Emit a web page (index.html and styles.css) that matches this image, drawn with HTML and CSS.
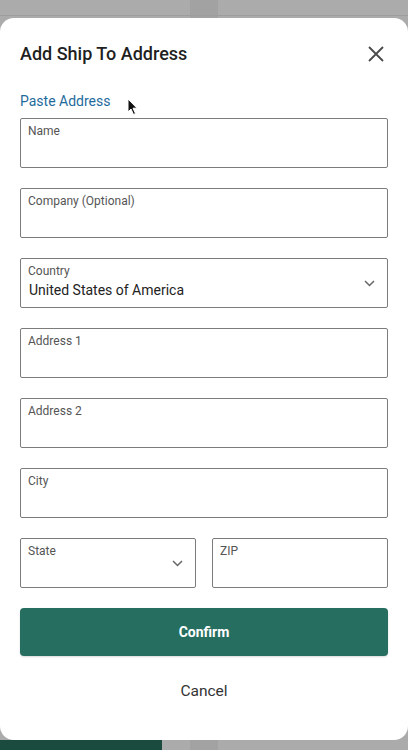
FILE: index.html
```html
<!DOCTYPE html>
<html lang="en">
<head>
<meta charset="utf-8">
<title>Add Ship To Address</title>
<link rel="stylesheet" href="styles.css">
</head>
<body>
<div class="modal">
  <div class="header">
    <h1 class="title">Add Ship To Address</h1>
    <button class="close" aria-label="Close">
      <svg width="16" height="16" viewBox="0 0 16 16"><path d="M1 1L15 15M15 1L1 15" stroke="#4a4a4a" stroke-width="1.8" fill="none"/></svg>
    </button>
  </div>
  <div class="paste-row">
    <a class="paste">Paste Address</a>
    <svg class="cursor" width="12" height="18" viewBox="0 0 12 18"><path d="M1 1L1 14L4 11L6.5 16.5L8.5 15.5L6 10.2L10 10.2Z" fill="#111" stroke="#fff" stroke-width="1"/></svg>
  </div>
  <div class="fields">
    <div class="field"><span class="label">Name</span></div>
    <div class="field"><span class="label">Company (Optional)</span></div>
    <div class="field select"><span class="label">Country</span><span class="value">United States of America</span>
      <svg class="chev" width="11" height="7" viewBox="0 0 11 7"><path d="M1 1L5.5 5.5L10 1" stroke="#666" stroke-width="1.5" fill="none"/></svg></div>
    <div class="field"><span class="label">Address 1</span></div>
    <div class="field"><span class="label">Address 2</span></div>
    <div class="field"><span class="label">City</span></div>
    <div class="row">
      <div class="field select"><span class="label">State</span>
        <svg class="chev" width="11" height="7" viewBox="0 0 11 7"><path d="M1 1L5.5 5.5L10 1" stroke="#666" stroke-width="1.5" fill="none"/></svg></div>
      <div class="field"><span class="label">ZIP</span></div>
    </div>
  </div>
  <button class="confirm">Confirm</button>
  <button class="cancel">Cancel</button>
</div>
</body>
</html>
```
FILE: styles.css
```css
* { box-sizing: border-box; }
html, body { margin: 0; padding: 0; }
body {
  width: 408px;
  height: 750px;
  overflow: hidden;
  font-family: Roboto, "Liberation Sans", sans-serif;
  background:
    linear-gradient(#1b4a3f, #1b4a3f) no-repeat 0 740px / 162px 10px,
    linear-gradient(#9d9d9d, #9d9d9d) no-repeat 0 15px / 100% 1px,
    linear-gradient(to right, #ababab 190px, #a2a2a2 190px, #a2a2a2 218px, #ababab 218px);
  padding-top: 18px;
}
.modal {
  background: #fff;
  height: 722px;
  border-radius: 14px;
  padding: 24px 20px 0;
  display: flex;
  flex-direction: column;
}
.header {
  display: flex;
  justify-content: space-between;
  align-items: center;
  height: 24px;
}
.title {
  margin: 0;
  font-size: 18px;
  font-weight: 500;
  color: #1f1f1f;
  line-height: 24px;
}
.close {
  border: 0;
  background: none;
  padding: 0;
  width: 16px;
  height: 16px;
  margin-right: 4px;
  display: flex;
}
.paste-row {
  position: relative;
  margin-top: 25px;
  height: 20px;
}
.paste {
  font-size: 14px;
  line-height: 20px;
  color: #1f6b9b;
}
.cursor {
  position: absolute;
  left: 107px;
  top: 7px;
}
.fields {
  margin-top: 7px;
  display: flex;
  flex-direction: column;
  gap: 20px;
}
.field {
  position: relative;
  height: 50px;
  border: 1px solid #7c7c7c;
  border-radius: 2px;
  padding: 4px 7px;
  display: flex;
  flex-direction: column;
}
.label {
  font-size: 12px;
  line-height: 16px;
  color: #555;
}
.value {
  font-size: 14px;
  line-height: 20px;
  color: #222;
  margin-top: 1px;
  padding-left: 1px;
}
.chev {
  position: absolute;
  right: 12px;
  top: 21px;
}
.row {
  display: flex;
  gap: 16px;
}
.row .field { flex: 1; }
.confirm {
  margin-top: 20px;
  height: 48px;
  border: 0;
  border-radius: 4px;
  background: #266e5f;
  color: #fff;
  font-family: inherit;
  font-size: 14px;
  font-weight: 700;
  box-shadow: 0 1px 2px rgba(0,0,0,0.15);
}
.cancel {
  margin-top: 25px;
  border: 0;
  background: none;
  font-family: inherit;
  font-size: 15.5px;
  line-height: 20px;
  color: #333;
  padding: 0;
}
```
